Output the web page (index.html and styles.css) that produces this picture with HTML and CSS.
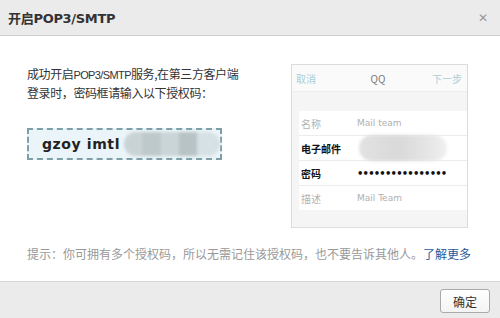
FILE: index.html
```html
<!DOCTYPE html>
<html lang="zh-CN">
<head>
    <meta charset="UTF-8">
    <meta name="viewport" content="width=device-width, initial-scale=1.0">
    <title>开启POP3/SMTP</title>
    <link rel="stylesheet" href="styles.css">
</head>
<body>
    <div class="dialog">
        <header class="dialog-header">
            <h1>开启POP3/SMTP</h1>
            <span class="close">&#x2715;</span>
        </header>
        <main class="dialog-body">
            <div class="content">
                <div class="left">
                    <p class="intro">成功开启<span class="latin">POP3/SMTP</span>服务,在第三方客户端<br>登录时，密码框请输入以下授权码：</p>
                    <div class="code-box">
                        <span class="code">gzoy imtl</span>
                        <span class="blur">
                            <i class="b1"></i><i class="b2"></i><i class="b3"></i><i class="b4"></i><i class="b5"></i>
                        </span>
                    </div>
                </div>
                <div class="phone">
                    <div class="phone-nav">
                        <span class="nav-btn">取消</span>
                        <span class="nav-title">QQ</span>
                        <span class="nav-btn">下一步</span>
                    </div>
                    <div class="phone-gap"></div>
                    <div class="rows">
                        <div class="row muted"><span class="label">名称</span><span class="value">Mail team</span></div>
                        <div class="row strong"><span class="label">电子邮件</span><span class="value"><span class="email-blur"></span></span></div>
                        <div class="row strong"><span class="label">密码</span><span class="value dots">••••••••••••••••</span></div>
                        <div class="row muted"><span class="label">描述</span><span class="value">Mail Team</span></div>
                    </div>
                </div>
            </div>
            <p class="hint">提示：你可拥有多个授权码，所以无需记住该授权码，也不要告诉其他人。<a href="#">了解更多</a></p>
        </main>
        <footer class="dialog-footer">
            <button type="button">确定</button>
        </footer>
    </div>
</body>
</html>
```
FILE: styles.css
```css
body {
    margin: 0;
    padding: 0;
    background-color: #fff;
    color: #333;
    font-family: "DejaVu Sans", "Noto Sans CJK SC", sans-serif;
}
.dialog {
    display: flex;
    flex-direction: column;
    width: 500px;
    height: 318px;
}
.dialog-header {
    display: flex;
    align-items: center;
    justify-content: space-between;
    height: 35px;
    padding: 0 12px 0 8px;
    background-color: #ebebeb;
    border-bottom: 1px solid #cfcfcf;
}
.dialog-header h1 {
    margin: 0;
    font-size: 13px;
    font-weight: bold;
    color: #333;
    letter-spacing: -0.3px;
}
.close {
    color: #999;
    font-size: 12px;
}
.dialog-body {
    flex: 1;
    display: flex;
    flex-direction: column;
}
.content {
    display: flex;
    justify-content: space-between;
    padding: 28px 32px 0 27px;
}
.intro {
    margin: 1px 0 0;
    font-family: "Noto Sans CJK SC", sans-serif;
    font-size: 12px;
    line-height: 18px;
    color: #333;
    letter-spacing: -0.4px;
    white-space: nowrap;
}
.latin {
    font-family: "Liberation Sans", sans-serif;
    font-size: 11px;
    letter-spacing: -0.6px;
}
.code-box {
    display: flex;
    align-items: center;
    width: 178px;
    height: 28px;
    margin-top: 26px;
    padding-left: 13px;
    box-sizing: content-box;
    border: 2px dashed #7c9fa8;
    background-color: #ebf4f8;
    white-space: nowrap;
}
.code {
    font-family: "DejaVu Sans", sans-serif;
    font-size: 14px;
    font-weight: bold;
    letter-spacing: 0.6px;
    color: #222;
}
.blur {
    display: flex;
    height: 24px;
    margin-left: 4px;
    border-radius: 12px;
    overflow: hidden;
    filter: blur(1.5px);
}
.blur i {
    display: block;
    width: 19px;
}
.b1 { background-color: #c9d3d6; }
.b2 { background-color: #bec9cc; }
.b3 { background-color: #cad5d8; }
.b4 { background-color: #b8c3c6; }
.b5 { background-color: #d6e1e5; width: 24px !important; }
.phone {
    width: 175px;
    height: 162px;
    border: 1px solid #dcdcdc;
    background-color: #f5f5f6;
    font-family: "Noto Sans CJK SC", sans-serif;
    font-size: 10px;
}
.phone-nav {
    display: flex;
    justify-content: space-between;
    align-items: center;
    height: 26px;
    padding: 0 5px 0 4px;
    background-color: #fafafa;
    border-bottom: 1px solid #eee;
}
.nav-btn {
    color: #a9cfd8;
}
.nav-title {
    color: #777;
    margin-left: 8px;
}
.phone-gap {
    height: 19px;
}
.rows {
    margin-left: 7px;
    background-color: #fff;
}
.row {
    display: flex;
    align-items: center;
    height: 24px;
    border-bottom: 1px solid #ececec;
}
.row:last-child {
    border-bottom: none;
}
.label {
    width: 56px;
    padding-left: 2px;
}
.muted .label {
    color: #b3b3b3;
}
.muted .value {
    color: #b0b0b0;
    font-family: "DejaVu Sans", sans-serif;
    font-size: 9px;
}
.strong .label {
    color: #111;
    font-weight: bold;
}
.dots {
    color: #111;
    font-family: "DejaVu Sans", sans-serif;
    font-size: 10px;
    font-weight: bold;
    letter-spacing: -0.8px;
}
.email-blur {
    display: block;
    width: 88px;
    height: 26px;
    margin-left: 2px;
    border-radius: 13px;
    background: linear-gradient(90deg, #e2e2e2, #d9d9d9 45%, #e4e4e4 75%, #f0f0f0);
    filter: blur(1.5px);
}
.hint {
    margin: 17px 0 0 27px;
    font-family: "Noto Sans CJK SC", sans-serif;
    font-size: 12px;
    line-height: 18px;
    color: #999;
    letter-spacing: 0;
    white-space: nowrap;
}
.hint a {
    color: #1f5a9c;
    text-decoration: none;
}
.dialog-footer {
    display: flex;
    justify-content: flex-end;
    align-items: center;
    height: 36px;
    margin-top: auto;
    padding-right: 10px;
    background-color: #ebebeb;
    border-top: 1px solid #d6d6d6;
}
.dialog-footer button {
    width: 50px;
    height: 24px;
    margin-top: 2px;
    padding: 0;
    font-family: "Noto Sans CJK SC", sans-serif;
    font-size: 12px;
    color: #333;
    background: linear-gradient(#fff, #f4f4f4);
    border: 1px solid #a9a9a9;
    border-radius: 3px;
}
```
